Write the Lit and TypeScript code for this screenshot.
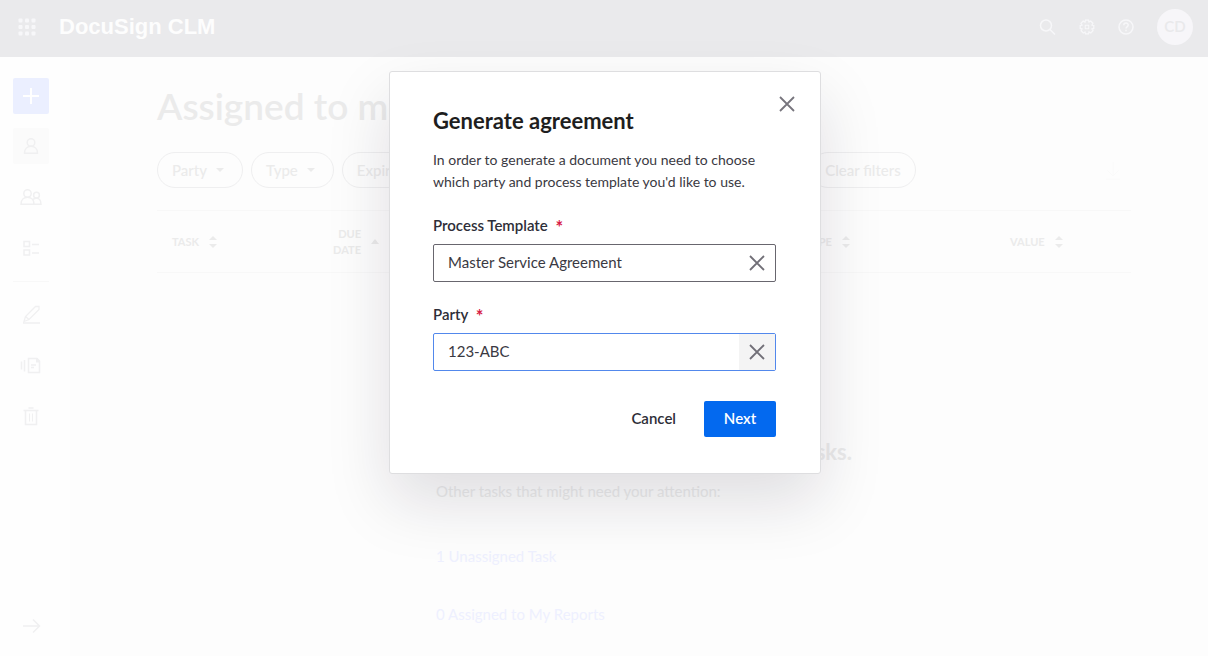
import { LitElement, html, css, svg } from "lit";
import { customElement, state } from "lit/decorators.js";

const icon = (body: unknown, size = 24) => html`<svg class="icon" width=${size} height=${size} viewBox="0 0 ${size} ${size}" aria-hidden="true">${body}</svg>`;

const cross = icon(svg`<path d="M2 2L16 16M16 2L2 16" stroke-width="1.8"/>`, 18);
const sortBoth = html`<svg class="sort" width="10" height="14" viewBox="0 0 10 14" aria-hidden="true"><path d="M5 1L9 5H1ZM1 9H9L5 13Z"/></svg>`;
const sortUp = html`<svg class="sort" width="10" height="14" viewBox="0 0 10 14" aria-hidden="true"><path d="M5 4L9 9H1Z"/></svg>`;
const caret = html`<svg class="sort" width="10" height="6" viewBox="0 0 10 6" aria-hidden="true"><path d="M1 1H9L5 5Z"/></svg>`;

const icons = {
  plus: icon(svg`<path d="M12 4V20M4 12H20" stroke-width="2"/>`),
  person: icon(svg`<circle cx="12" cy="8.500" r="3.800"/><path d="M5.500 19.200C5.500 14.500 8.500 12.300 12 12.300S18.500 14.500 18.500 19.200Z"/>`),
  people: icon(svg`<circle cx="8.500" cy="8.500" r="3.700"/><path d="M2 19.200C2 14.500 5 12.300 8.500 12.300S15 14.500 15 19.200ZM15 19.200H22C22 15 20 13.200 17.500 13.200Q15.500 13.200 14 14.300"/><circle cx="17.500" cy="10.200" r="2.900"/>`),
  list: icon(svg`<path d="M5 5.500H10.500V10.500H5ZM5 14H10.500V19H5ZM13 8.500H20M13 17H20"/>`),
  pencil: icon(svg`<path d="M5 18.500L6.500 13.500L16.500 3.500L20 3.500V6.500L10 16.500ZM6.500 13.500L10 16.500M4 20H21" stroke-width="1.300"/>`),
  pages: icon(svg`<path d="M9.500 4.500H18L20.500 7V18.500H9.500ZM12 11H17M12 13.500H15M2.500 7.500V15.500M5.500 6V17.500"/><path class="fill" d="M17 4.500V8.500H20.500V7L18 4.500Z"/>`),
  trash: icon(svg`<path d="M6.500 6V19.500H17.500V6M4.500 5.500H19.500M9.500 3H14.500"/><path d="M10.500 8.500V16.500M13.500 8.500V16.500" stroke-width="1"/>`),
  arrow: icon(svg`<path d="M4 12H20.500M14 5.500L20.500 12L14 18.500"/>`),
  grid: icon(svg`${[0, 1, 2].map((r) => [0, 1, 2].map((c) => svg`<rect class="fill" x=${3.5 + c * 6.5} y=${3.5 + r * 6.5} width="4" height="4" rx="1"/>`))}`),
  search: icon(svg`<circle cx="10" cy="10.500" r="5.500"/><path d="M14 14.500L19 19.500"/>`),
  gear: icon(svg`<path d="M10.500 5.200H13.500L14 7L15.700 6L17.900 8.200L17 10L18.800 10.500V13.500L17 14L18 15.700L15.800 17.900L14 17L13.500 18.800H10.500L10 17L8.300 18L6.100 15.800L7 14L5.200 13.500V10.500L7 10L6 8.300L8.200 6.100L10 7Z" stroke-width="1.300"/><rect x="10.300" y="10.300" width="3.400" height="3.400" stroke-width="1"/>`),
  help: icon(svg`<circle cx="12" cy="12" r="7"/><path d="M9.800 10.200C9.800 7.300 14.200 7.300 14.200 10.100C14.200 11.800 12 11.800 12 13.500M12 14.800V16.200"/>`),
  download: icon(svg`<path d="M12 4V18M6.500 12.500L12 18L17.500 12.500M5 21H19" stroke-width="1"/>`),
};

@customElement("app-root")
export class AppRoot extends LitElement {
  @state() private template = "Master Service Agreement";
  @state() private party = "123-ABC";

  static styles = css`
    :host { display: block; min-height: 100vh; background: #fdfdfd; color: #ebebeb; font: 15px/22px Lato, "Open Sans", sans-serif; }
    * { box-sizing: border-box; }
    h1, h2, p { margin: 0; }
    button, input { font: inherit; color: inherit; background: none; border: 0; padding: 0; margin: 0; border-radius: 2px; outline: 0; }
    button { display: inline-flex; align-items: center; justify-content: center; cursor: pointer; }
    a { color: #eef0ff; text-decoration: none; }
    .icon { display: block; fill: none; stroke: currentColor; stroke-width: 1.5; }
    .icon .fill { fill: currentColor; stroke: none; }
    .sort { display: block; fill: currentColor; flex: none; }
    .page { display: flex; flex-direction: column; min-height: 100vh; }
    .top { display: flex; align-items: center; height: 57px; padding: 0 15px 3px; background: #eaeaec; color: #f7f7f9; }
    .brand { margin-left: 20px; font: bold 22px/28px "Liberation Sans", Arial, sans-serif; color: #fdfdfd; }
    .tools { display: flex; align-items: center; gap: 15px; margin-left: auto; }
    .avatar { width: 36px; height: 36px; margin-left: 4px; padding-bottom: 2px; border-radius: 50%; background: #f7f6f9; color: #e9e9eb; font-weight: 600; }
    .body { display: flex; flex: 1; }
    .rail { display: flex; flex-direction: column; align-items: center; width: 70px; padding: 21px 8px 12px 0; background: #fefefe; color: #f0f0f1; }
    .rail button { width: 36px; height: 36px; margin-bottom: 15px; padding-right: 1px; }
    .rail .add { margin-bottom: 14px; background: #ebefff; color: #fff; }
    .rail .current { background: #fbfbfb; }
    .rail hr { width: 36px; margin: 0 0 15px; border: 0; border-top: 1px solid #f8f8f8; }
    .rail .expand { margin: auto 0 0; }
    main { flex: 1; padding: 24px 77px 0 87px; }
    h1 { font-size: 37px; line-height: 50px; font-weight: 600; color: #ebebeb; }
    .filters { display: flex; align-items: center; gap: 8px; margin-top: 21px; }
    .pill { height: 36px; padding: 0 17px 0 14px; gap: 8px; border: 1px solid #efeff0; border-radius: 18px; white-space: nowrap; font-weight: 500; }
    .clear { margin-left: 342px; padding: 0 14px; }
    .download { margin-left: auto; padding: 0 6px; color: #fafafa; }
    table { width: 100%; margin-top: 22px; border-collapse: collapse; table-layout: fixed; }
    th { height: 62px; padding: 0 15px; border: solid #f8f8f8; border-width: 1px 0; font-size: 11px; line-height: 16px; font-weight: 700; text-align: left; }
    .head { display: flex; align-items: center; gap: 9px; }
    .due { justify-content: flex-end; text-align: right; }
    .c1 { width: 150px; } .c2 { width: 88px; } .c3 { width: 395px; } .c4 { width: 205px; }
    .empty { width: 416px; margin: 165px auto 0; }
    .empty h2 { font-size: 22px; line-height: 28px; font-weight: 700; text-align: right; white-space: nowrap; }
    .empty p { margin-top: 14px; }
    .empty a { display: block; margin-top: 36px; }
    .empty p + a { margin-top: 43px; }
    .scrim { position: absolute; inset: 0; display: flex; align-items: flex-start; justify-content: center; padding: 71px 0 0 2px; }
    .dialog { position: relative; width: 432px; max-width: 100%; padding: 35px 44px 36px 43px; background: #fff; color: #2e2e38; border: 1px solid #dedee0; border-radius: 3px; box-shadow: 0 28px 64px rgba(25, 15, 35, .13); }
    .dialog h2 { color: #1e1e1e; font-size: 22px; line-height: 28px; font-weight: 700; }
    .dialog p { margin-top: 14px; font-size: 14px; color: #3a3942; }
    .close { position: absolute; top: 14px; right: 15px; width: 36px; height: 36px; color: #77757d; }
    .field { display: block; margin-top: 22px; }
    label { display: block; font-weight: 600; line-height: 20px; }
    .req { margin-left: 4px; color: #d71a45; font-size: 18px; line-height: 16px; font-weight: 700; vertical-align: -3px; }
    .box { display: flex; height: 38px; margin-top: 9px; border: 1px solid #68666e; border-radius: 2px; }
    .box input { flex: 1; min-width: 0; padding: 0 14px 2px; color: #3a3942; }
    .box button { width: 36px; color: #716f77; border-radius: 0; }
    .box.active { border-color: #5288ec; }
    .box.active button { background: #f4f4f4; }
    .actions { display: flex; justify-content: flex-end; gap: 7px; margin-top: 30px; }
    .actions button { height: 36px; padding: 0 21px 2px; font-weight: 600; }
    .actions .next { width: 72px; background: #0369ef; color: #fff; }
  `;

  render() {
    return html`
      <div class="page">
        <header class="top">
          <button aria-label="Apps">${icons.grid}</button>
          <span class="brand">DocuSign CLM</span>
          <div class="tools">
            <button aria-label="Search">${icons.search}</button>
            <button aria-label="Settings">${icons.gear}</button>
            <button aria-label="Help">${icons.help}</button>
            <button class="avatar">CD</button>
          </div>
        </header>
        <div class="body">
          <nav class="rail">
            <button class="add" aria-label="New">${icons.plus}</button>
            <button class="current" aria-label="My tasks">${icons.person}</button>
            <button aria-label="Team tasks">${icons.people}</button>
            <button aria-label="Lists">${icons.list}</button>
            <hr />
            <button aria-label="Edit">${icons.pencil}</button>
            <button aria-label="Documents">${icons.pages}</button>
            <button aria-label="Trash">${icons.trash}</button>
            <button class="expand" aria-label="Expand">${icons.arrow}</button>
          </nav>
          <main>
            <h1>Assigned to me</h1>
            <div class="filters">
              <button class="pill">Party ${caret}</button>
              <button class="pill">Type ${caret}</button>
              <button class="pill">Expiration ${caret}</button>
              <button class="pill clear">Clear filters</button>
              <button class="download" aria-label="Download">${icons.download}</button>
            </div>
            <table>
              <thead>
                <tr>
                  <th class="c1"><div class="head">TASK ${sortBoth}</div></th>
                  <th class="c2"><div class="head due"><span>DUE DATE</span>${sortUp}</div></th>
                  <th class="c3"></th>
                  <th class="c4"><div class="head">TYPE ${sortBoth}</div></th>
                  <th><div class="head">VALUE ${sortBoth}</div></th>
                </tr>
              </thead>
            </table>
            <section class="empty">
              <h2>You have no assigned tasks.</h2>
              <p>Other tasks that might need your attention:</p>
              <a href="#unassigned">1 Unassigned Task</a>
              <a href="#reports">0 Assigned to My Reports</a>
            </section>
          </main>
        </div>
      </div>
      <div class="scrim">
        <section class="dialog" role="dialog" aria-modal="true" aria-labelledby="title">
          <button class="close" aria-label="Close">${cross}</button>
          <h2 id="title">Generate agreement</h2>
          <p>In order to generate a document you need to choose which party and process template you'd like to use.</p>
          <div class="field">
            <label for="template">Process Template <span class="req">*</span></label>
            <div class="box">
              <input id="template" type="text" .value=${this.template} @input=${(e: Event) => (this.template = (e.target as HTMLInputElement).value)} />
              <button aria-label="Clear process template" @click=${() => (this.template = "")}>${cross}</button>
            </div>
          </div>
          <div class="field">
            <label for="party">Party <span class="req">*</span></label>
            <div class="box active">
              <input id="party" type="text" .value=${this.party} @input=${(e: Event) => (this.party = (e.target as HTMLInputElement).value)} />
              <button aria-label="Clear party" @click=${() => (this.party = "")}>${cross}</button>
            </div>
          </div>
          <div class="actions">
            <button>Cancel</button>
            <button class="next">Next</button>
          </div>
        </section>
      </div>
    `;
  }
}
